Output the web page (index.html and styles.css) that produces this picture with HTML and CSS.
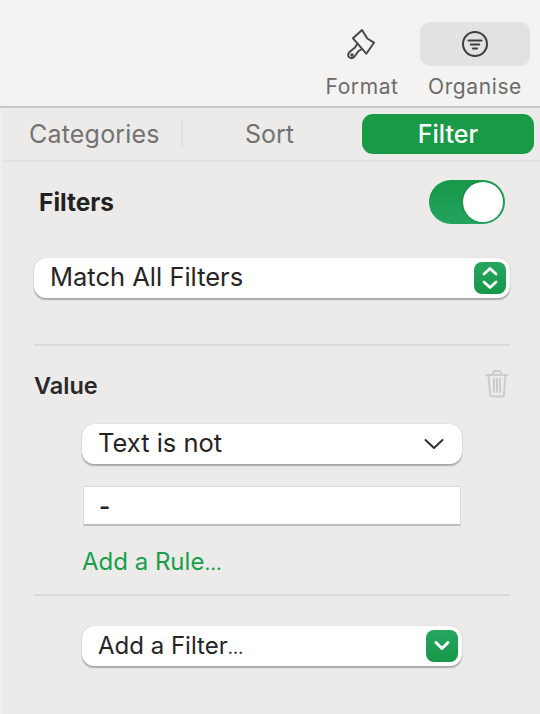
FILE: index.html
```html
<!DOCTYPE html>
<html lang="en">
<head>
<meta charset="utf-8">
<title>Organise</title>
<link rel="stylesheet" href="styles.css">
</head>
<body>
<header class="toolbar">
  <div class="tool">
    <div class="tool-icon">
      <svg width="30" height="32" viewBox="0 0 30 32" fill="none" stroke="#4a4948" stroke-width="2" stroke-linejoin="round" stroke-linecap="round">
        <path d="M15 2 L20.300 10.500 L27 14.700 L19.300 25.700 L6 10.300 Z"/>
        <path d="M10.500 15.500 L8 19.500 L2.500 24 C0.500 26 1 28.500 2.500 29.500 C4 30.500 6 30 7.500 28.500 L11.500 23 L15 21"/>
        <circle cx="5" cy="27" r="0.8"/>
      </svg>
    </div>
    <span class="tool-label">Format</span>
  </div>
  <div class="tool">
    <div class="tool-icon tool-icon-active">
      <svg width="28" height="28" viewBox="0 0 28 28" fill="none" stroke="#3f3e3d" stroke-linecap="round">
        <circle cx="14" cy="14" r="12" stroke-width="2"/>
        <path d="M7.500 10.500 H20.500 M9.800 14.500 H18.200 M12 18.500 H16" stroke-width="2"/>
      </svg>
    </div>
    <span class="tool-label">Organise</span>
  </div>
</header>
<main class="panel">
  <nav class="tabs">
    <span class="tab tab-categories">Categories</span>
    <span class="tab-divider"></span>
    <span class="tab tab-sort">Sort</span>
    <span class="tab tab-active">Filter</span>
  </nav>
  <section class="content">
    <div class="filters-row">
      <strong class="heading">Filters</strong>
      <div class="toggle"><span class="knob"></span></div>
    </div>
    <div class="select select-wide">
      <span class="select-text">Match All Filters</span>
      <span class="stepper">
        <svg width="18" height="26" viewBox="0 0 18 26" fill="none" stroke="#fff" stroke-width="2.800" stroke-linecap="round" stroke-linejoin="round">
          <path d="M3 9 L9 3.500 L15 9 M3 17 L9 22.500 L15 17"/>
        </svg>
      </span>
    </div>
    <hr class="rule rule-top">
    <div class="value-row">
      <strong class="value-label">Value</strong>
      <svg class="trash" width="24" height="28" viewBox="0 0 24 28" fill="none" stroke="#cdcccb" stroke-width="2" stroke-linecap="round" stroke-linejoin="round">
        <path d="M1.500 5 H22.500 M8 5 V3.500 C8 2 9 1 10.500 1 H13.500 C15 1 16 2 16 3.500 V5 M3.500 5 L5 24.500 C5.100 26 6 26.500 7 26.500 H17 C18 26.500 18.900 26 19 24.500 L20.500 5 M9 9 V22 M12 9 V22 M15 9 V22"/>
      </svg>
    </div>
    <div class="rule-editor">
      <div class="select select-rule">
        <span class="select-text">Text is not</span>
        <svg class="chevron" width="20" height="12" viewBox="0 0 20 12" fill="none" stroke="#2f2e2d" stroke-width="2" stroke-linecap="round" stroke-linejoin="round">
          <path d="M1.500 2 L10 10 L18.500 2"/>
        </svg>
      </div>
      <div class="text-field">-</div>
      <a class="add-rule">Add a Rule<span class="dots-rule">…</span></a>
    </div>
    <hr class="rule rule-bottom">
    <div class="rule-editor">
      <div class="select select-rule select-add">
        <span class="select-add-text">Add a Filter<span class="dots">…</span></span>
        <span class="stepper">
          <svg width="18" height="12" viewBox="0 0 18 12" fill="none" stroke="#fff" stroke-width="3" stroke-linecap="round" stroke-linejoin="round">
            <path d="M3 2.500 L9 8.500 L15 2.500"/>
          </svg>
        </span>
      </div>
    </div>
  </section>
</main>
</body>
</html>
```
FILE: styles.css
```css
* { box-sizing: border-box; }
html, body { margin: 0; padding: 0; }
body {
  width: 540px;
  height: 714px;
  overflow: hidden;
  background: #ecebe9;
  font-family: Inter, "Liberation Sans", sans-serif;
  color: #242322;
}
.toolbar {
  height: 108px;
  background: #f4f3f1;
  border-bottom: 2px solid #c8c7c5;
  display: flex;
  justify-content: flex-end;
  padding: 22px 10px 0 0;
  gap: 3px;
}
.tool {
  display: flex;
  flex-direction: column;
  align-items: center;
  width: 110px;
}
.tool-icon {
  width: 110px;
  height: 44px;
  border-radius: 10px;
  display: flex;
  align-items: center;
  justify-content: center;
}
.tool-icon-active { background: #e3e2e0; }
.tool-label {
  margin-top: 8px;
  font-size: 21px;
  line-height: 26px;
  color: #6c6b6a;
  letter-spacing: 0.6px;
}
.panel { border-left: 2px solid #f0efed; height: 606px; }
.tabs {
  height: 54px;
  border-bottom: 2px solid #e3e2e0;
  display: flex;
  align-items: center;
  padding: 0 6px 0 0;
}
.tab { font-size: 25px; line-height: 40px; color: #737271; }
.tab-categories { margin-left: 27px; width: 152px; letter-spacing: 0.2px; }
.tab-divider { width: 2px; height: 28px; background: #e2e1df; }
.tab-sort { margin-left: 62px; width: 117px; }
.tab-active {
  width: 172px;
  height: 40px;
  background: #189a46;
  border-radius: 11px;
  color: #fff;
  font-weight: 500;
  text-align: center;
}
.content { padding: 0 30px 0 32px; }
.filters-row {
  height: 62px;
  margin-top: 9px;
  padding: 0 5px;
  display: flex;
  align-items: center;
  justify-content: space-between;
}
.heading { font-size: 24.500px; font-weight: 700; color: #222120; }
.toggle {
  width: 76px;
  height: 44px;
  border-radius: 22px;
  background: linear-gradient(#179748, #24a360);
  padding: 2px;
  display: flex;
  justify-content: flex-end;
}
.knob { width: 40px; height: 40px; border-radius: 50%; background: #fff; box-shadow: -1px 0 2px rgba(0,0,0,.15); }
.select {
  background: #fff;
  border-radius: 12px;
  height: 40px;
  display: flex;
  align-items: center;
  justify-content: space-between;
  font-size: 25.500px;
  color: #262524;
  box-shadow: 0 0 1px rgba(0,0,0,.25), 0 1.500px 1.500px rgba(0,0,0,.28);
}
.select-text { margin-bottom: 3px; }
.select-wide { margin-top: 25px; padding: 0 4px 0 16px; }
.select-add { font-size: 24px; }
.select-add-text { margin-bottom: 1px; }
.dots { font-size: 18px; }
.dots-rule { font-size: 20px; }
.stepper {
  width: 32px;
  height: 32px;
  border-radius: 8px;
  background: linear-gradient(#27a55f, #179748);
  display: flex;
  align-items: center;
  justify-content: center;
}
.rule { margin: 0; border: 0; height: 2px; background: #dbdad8; }
.rule-top { margin-top: 46px; }
.value-row {
  height: 78px;
  display: flex;
  align-items: center;
  justify-content: space-between;
}
.value-label { font-size: 23.500px; font-weight: 600; color: #2a2928; }
.trash { margin: 0 1px 3px 0; }
.rule-editor { padding: 0 48px; }
.select-rule { padding: 0 4px 0 16px; }
.select-rule .chevron { margin-right: 14px; }
.text-field {
  margin: 22px 1px 0 1px;
  height: 40px;
  background: #fff;
  border: 1px solid #dcdbd9;
  border-bottom: 2px solid #bdbcba;
  padding: 0 15px;
  font-size: 24px;
  font-weight: 600;
  line-height: 40px;
}
.add-rule { display: block; margin-top: 16px; font-size: 24px; line-height: 40px; color: #17a049; }
.rule-bottom { margin-top: 11px; margin-bottom: 30px; }
```
